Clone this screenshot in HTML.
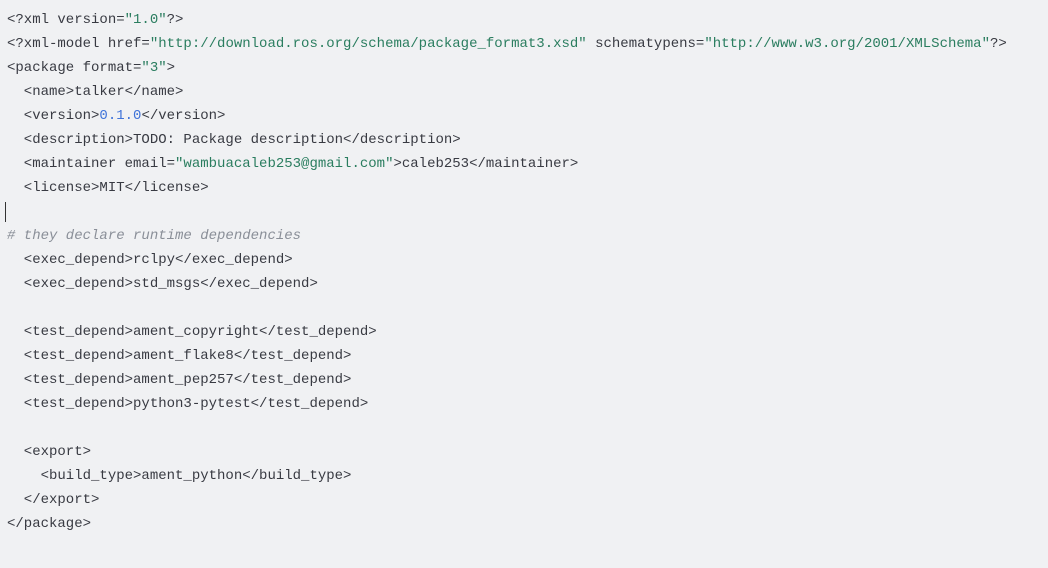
<!DOCTYPE html>
<html><head><meta charset="utf-8"><style>
html,body{margin:0;padding:0;background:#f0f1f3;width:1048px;height:568px;overflow:hidden}
pre{margin:0;position:absolute;left:7px;top:8px;font-family:"Liberation Mono",monospace;font-size:14px;line-height:24px;color:#383a42}
.s{color:#2a7d5f}.n{color:#3f73d9}.c{color:#8a8f98;font-style:italic}
.cur{position:absolute;left:5px;top:202px;width:1px;height:20px;background:#333}
</style></head><body>
<pre>&lt;?xml version=<span class="s">"1.0"</span>?&gt;
&lt;?xml-model href=<span class="s">"http://download.ros.org/schema/package_format3.xsd"</span> schematypens=<span class="s">"http://www.w3.org/2001/XMLSchema"</span>?&gt;
&lt;package format=<span class="s">"3"</span>&gt;
  &lt;name&gt;talker&lt;/name&gt;
  &lt;version&gt;<span class="n">0.1.0</span>&lt;/version&gt;
  &lt;description&gt;TODO: Package description&lt;/description&gt;
  &lt;maintainer email=<span class="s">"wambuacaleb253@gmail.com"</span>&gt;caleb253&lt;/maintainer&gt;
  &lt;license&gt;MIT&lt;/license&gt;

<span class="c"># they declare runtime dependencies</span>
  &lt;exec_depend&gt;rclpy&lt;/exec_depend&gt;
  &lt;exec_depend&gt;std_msgs&lt;/exec_depend&gt;

  &lt;test_depend&gt;ament_copyright&lt;/test_depend&gt;
  &lt;test_depend&gt;ament_flake8&lt;/test_depend&gt;
  &lt;test_depend&gt;ament_pep257&lt;/test_depend&gt;
  &lt;test_depend&gt;python3-pytest&lt;/test_depend&gt;

  &lt;export&gt;
    &lt;build_type&gt;ament_python&lt;/build_type&gt;
  &lt;/export&gt;
&lt;/package&gt;</pre>
<div class="cur"></div>
</body></html>
